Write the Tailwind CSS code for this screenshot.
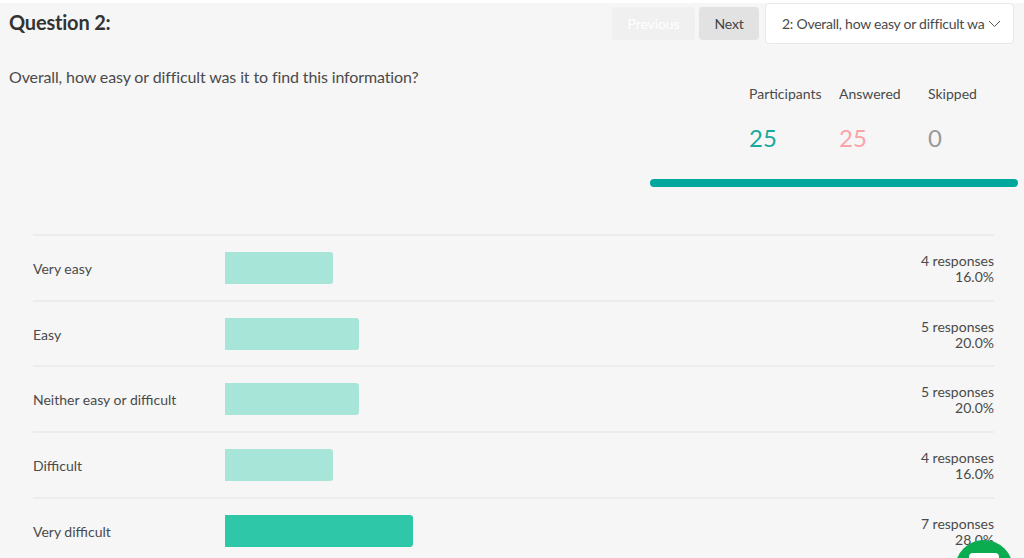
<!DOCTYPE html>
<html lang="en">
<head>
  <meta charset="UTF-8" />
  <title>Question 2</title>
  <script src="https://cdn.jsdelivr.net/npm/@tailwindcss/browser@4"></script>
</head>
<body class="bg-white font-['Lato',sans-serif] text-[#4a4a4a]">
  <div class="relative h-[558px] w-[1024px] overflow-hidden pt-[3px]">
    <div class="h-full bg-[#f6f6f6]">
      <!-- Header -->
      <div class="flex h-[41px] items-start justify-between pl-[9px] pr-[10px]">
        <h1 class="pt-[6px] text-[20px] leading-[26px] font-bold tracking-[-0.2px] text-[#333]">Question 2:</h1>
        <div class="flex items-start">
          <button class="mt-[4px] h-[33px] w-[83px] rounded-sm bg-[#f0f0f0] text-sm tracking-[-0.1px] text-white">Previous</button>
          <button class="ml-[4px] mt-[4px] h-[33px] w-[60px] rounded-sm bg-[#e2e2e2] text-sm tracking-[-0.2px] text-[#444]">Next</button>
          <div class="ml-[6px] flex h-[41px] w-[249px] items-center rounded-sm border border-[#e8e8e8] bg-white pl-[16px] pr-[12px] text-sm">
            <span class="w-[203px] overflow-hidden whitespace-nowrap tracking-[-0.25px]">2: Overall, how easy or difficult was it to find this information?</span>
            <svg class="ml-[3px] h-[8px] w-[13px] text-[#555]" viewBox="0 0 13 8" fill="none" stroke="currentColor" stroke-width="1"><path d="M1 1l5.500 5.500L12 1" /></svg>
          </div>
        </div>
      </div>

      <!-- Question and stats -->
      <div class="flex h-[190px] items-start justify-between">
        <p class="pl-[9px] pt-[22px] text-[16px] leading-[22px] tracking-[-0.12px]">Overall, how easy or difficult was it to find this information?</p>
        <div class="mr-[6px] w-[368px] pt-[40px]">
          <div class="flex pl-[99px] text-sm leading-[20px]">
            <div class="w-[90px]">
              <div>Participants</div>
              <div class="mt-[19px] text-[24px] leading-[30px] text-[#1aa99c]">25</div>
            </div>
            <div class="w-[89px]">
              <div>Answered</div>
              <div class="mt-[19px] text-[24px] leading-[30px] text-[#fba3a8]">25</div>
            </div>
            <div>
              <div>Skipped</div>
              <div class="mt-[19px] text-[24px] leading-[30px] text-[#9a9a9a]">0</div>
            </div>
          </div>
          <div class="mt-[26px] h-[8px] rounded-full bg-[#00a79d]"></div>
        </div>
      </div>

      <!-- Responses -->
      <div class="mr-[30px] ml-[33px] text-sm">
        <div class="flex h-[65.700px] items-center border-t-2 border-[#ececec]">
          <div class="w-[192px] pt-[2px]">Very easy</div>
          <div class="flex-1"><div class="h-[32px] w-[108px] rounded-r-[3px] bg-[#a7e5d9]"></div></div>
          <div class="pt-[2px] text-right leading-[16px]">4 responses<br />16.0%</div>
        </div>
        <div class="flex h-[65.700px] items-center border-t-2 border-[#ececec]">
          <div class="w-[192px] pt-[2px]">Easy</div>
          <div class="flex-1"><div class="h-[32px] w-[134px] rounded-r-[3px] bg-[#a7e5d9]"></div></div>
          <div class="pt-[2px] text-right leading-[16px]">5 responses<br />20.0%</div>
        </div>
        <div class="flex h-[65.700px] items-center border-t-2 border-[#ececec]">
          <div class="w-[192px] pt-[2px]">Neither easy or difficult</div>
          <div class="flex-1"><div class="h-[32px] w-[134px] rounded-r-[3px] bg-[#a7e5d9]"></div></div>
          <div class="pt-[2px] text-right leading-[16px]">5 responses<br />20.0%</div>
        </div>
        <div class="flex h-[65.700px] items-center border-t-2 border-[#ececec]">
          <div class="w-[192px] pt-[2px]">Difficult</div>
          <div class="flex-1"><div class="h-[32px] w-[108px] rounded-r-[3px] bg-[#a7e5d9]"></div></div>
          <div class="pt-[2px] text-right leading-[16px]">4 responses<br />16.0%</div>
        </div>
        <div class="flex h-[65.700px] items-center border-t-2 border-[#ececec]">
          <div class="w-[192px] pt-[2px]">Very difficult</div>
          <div class="flex-1"><div class="h-[32px] w-[188px] rounded-r-[3px] bg-[#2ec7a8]"></div></div>
          <div class="pt-[2px] text-right leading-[16px]">7 responses<br />28.0%</div>
        </div>
      </div>
    </div>

    <!-- Chat bubble -->
    <div class="absolute left-[955px] top-[540px] flex h-[58px] w-[58px] justify-center rounded-full bg-[#0bab4f] pt-[13px]">
      <div class="h-[20px] w-[30px] rounded-[4px] bg-white"></div>
    </div>
  </div>
</body>
</html>
